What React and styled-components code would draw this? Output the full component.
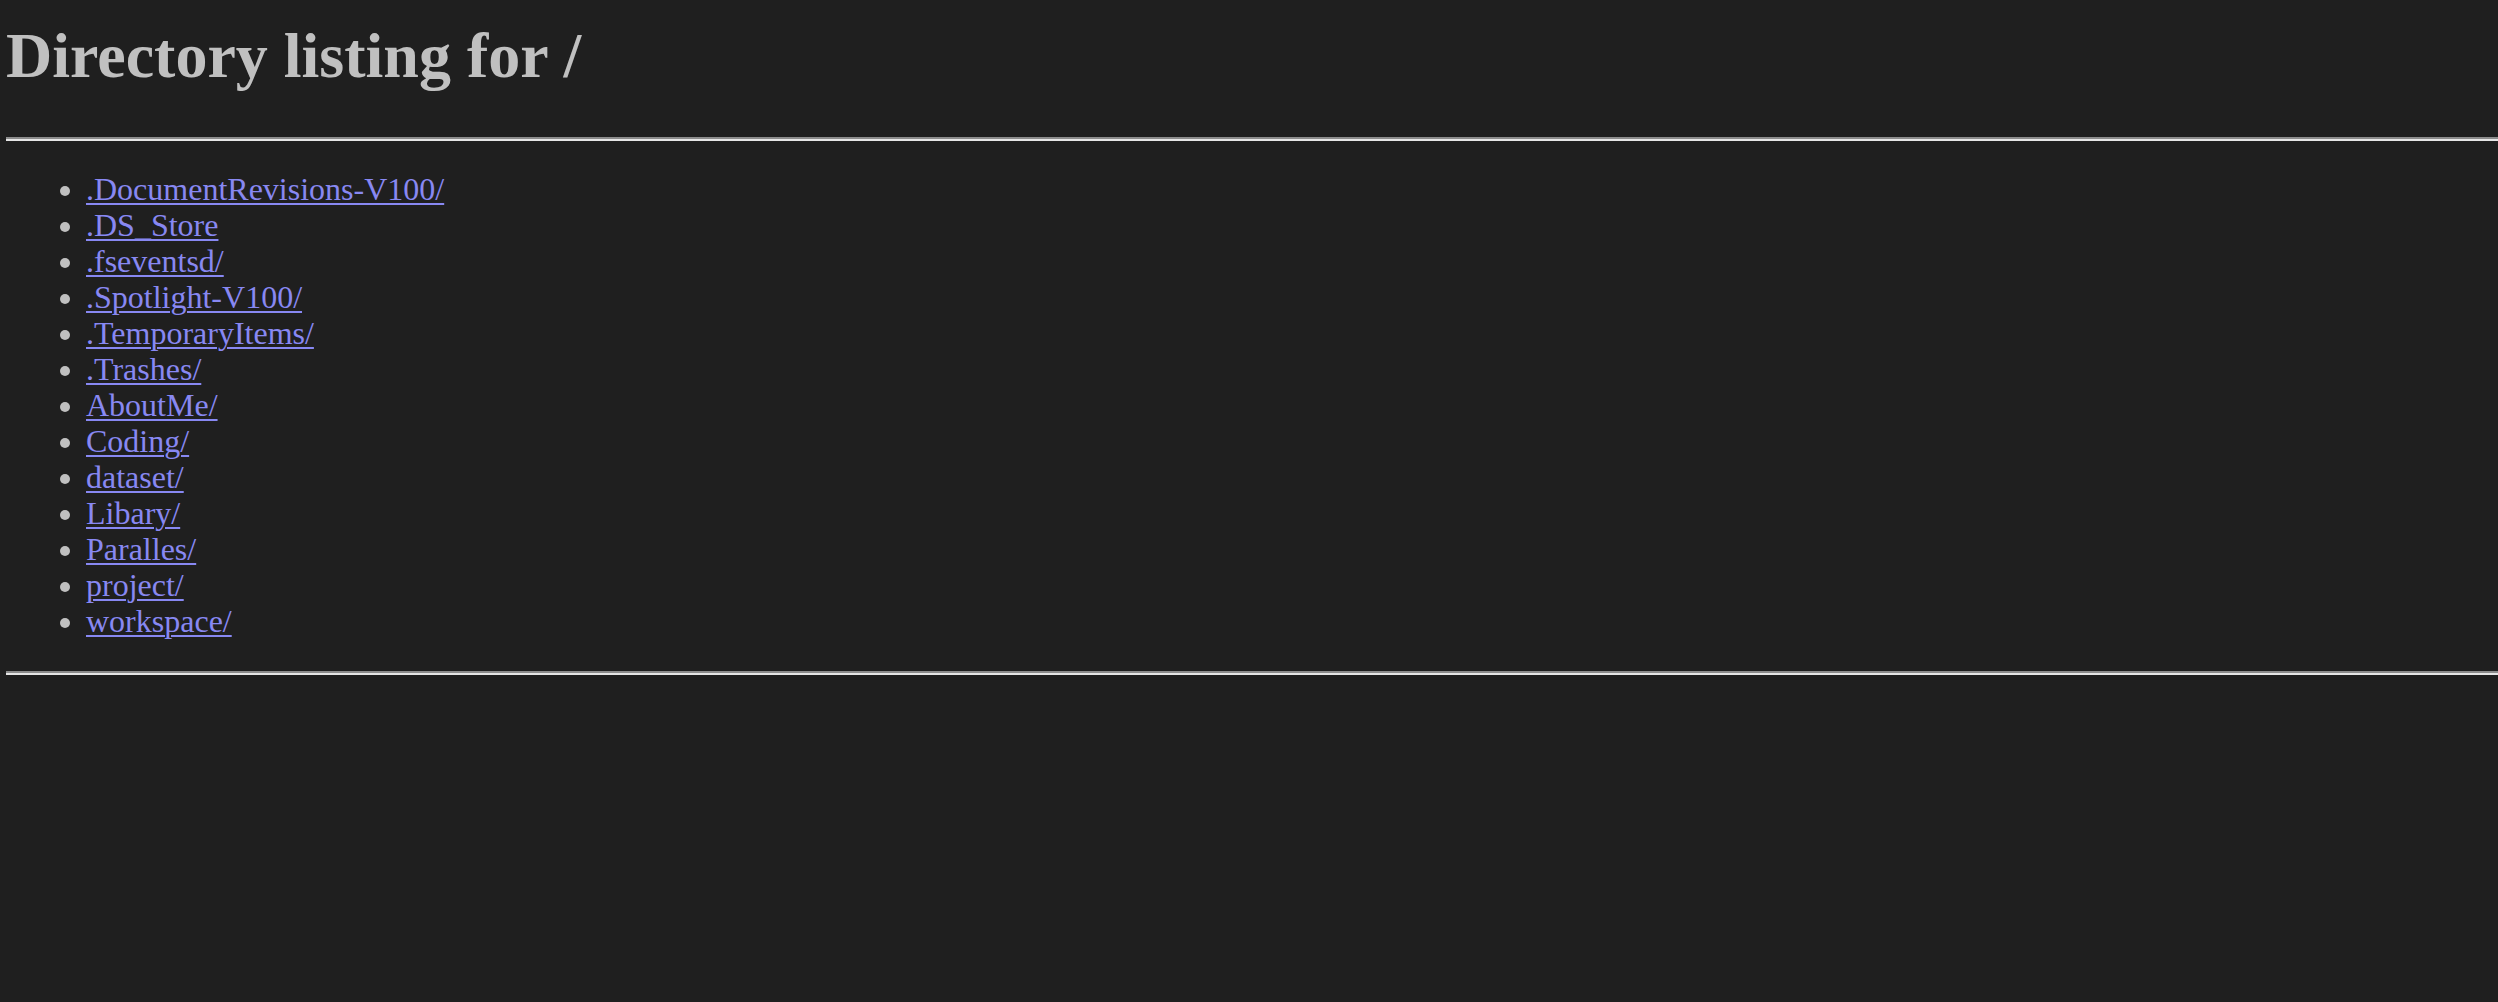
import React from "react";
import styled, { createGlobalStyle } from "styled-components";

const GlobalStyle = createGlobalStyle`
  html, body {
    margin: 0;
    padding: 0;
    background: #1f1f1f;
  }
  body {
    font-family: "Liberation Serif", "Times New Roman", serif;
    color: #c0c0c0;
  }
`;

const Page = styled.div`
  min-height: 1002px;
  padding-left: 6px;
  background: #1f1f1f;
  box-sizing: border-box;
  overflow: hidden;
`;

const Title = styled.h1`
  margin: 19px 0 44px;
  font-size: 64px;
  font-weight: 700;
  color: #c0c0c0;
  white-space: nowrap;
`;

const Rule = styled.hr`
  margin: 0;
  height: 0;
  border: none;
  border-top: 2px solid #8c8c8c;
  border-bottom: 2px solid #e6e6e6;
`;

const List = styled.ul`
  margin: 30px 0 32px;
  padding-left: 80px;
  font-size: 32px;
  line-height: 36px;
  color: #c0c0c0;
`;

const Item = styled.li`
  list-style: disc;
`;

const Link = styled.a`
  color: #8888f2;
  text-decoration: underline;
  text-decoration-thickness: 2px;
  text-underline-offset: 3px;
`;

const entries = [
  ".DocumentRevisions-V100/",
  ".DS_Store",
  ".fseventsd/",
  ".Spotlight-V100/",
  ".TemporaryItems/",
  ".Trashes/",
  "AboutMe/",
  "Coding/",
  "dataset/",
  "Libary/",
  "Paralles/",
  "project/",
  "workspace/",
];

export default function App() {
  return (
    <>
      <GlobalStyle />
      <Page>
        <Title>Directory listing for /</Title>
        <Rule />
        <List>
          {entries.map((name) => (
            <Item key={name}>
              <Link href={name}>{name}</Link>
            </Item>
          ))}
        </List>
        <Rule />
      </Page>
    </>
  );
}
